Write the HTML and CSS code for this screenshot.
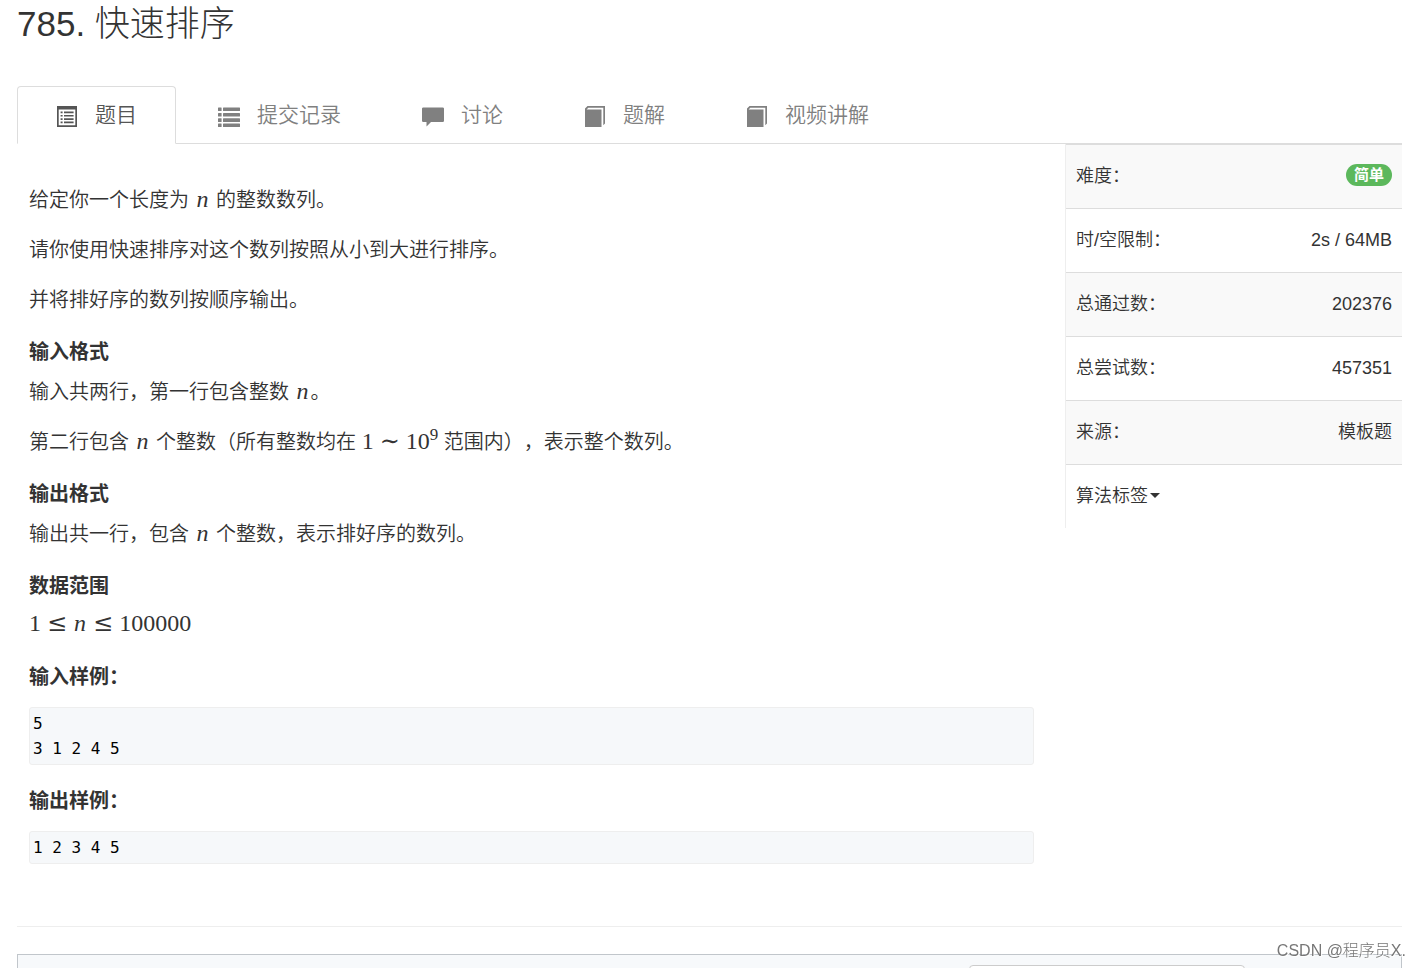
FILE: index.html
```html
<!DOCTYPE html>
<html lang="zh-CN">
<head>
<meta charset="utf-8">
<title>785. 快速排序</title>
<link rel="stylesheet" href="styles.css">
</head>
<body>
<div class="page">
  <h1 class="title">785. 快速排序</h1>

  <nav class="tabs">
    <a class="tab active" href="#problem">
      <svg class="icon" viewBox="0 0 22 22" aria-hidden="true"><path fill-rule="evenodd" d="M1 1h20v21H1zM2.700 4.600v15.700h16.600V4.600z"/><path d="M4.600 6.600h2v1.600h-2zM8 6.600h9.600v1.600H8zM4.600 10h2v1.600h-2zM8 10h9.600v1.600H8zM4.600 13.300h2v1.600h-2zM8 13.300h9.600v1.600H8zM4.600 16.600h2v1.600h-2zM8 16.600h9.600v1.600H8z"/></svg>
      <span>题目</span>
    </a>
    <a class="tab" href="#submissions">
      <svg class="icon" viewBox="0 0 22 22" aria-hidden="true"><rect x="0" y="2.500" width="3.600" height="3.600" rx=".5"/><rect x="5" y="2.500" width="17" height="3.600" rx=".5"/><rect x="0" y="8" width="3.600" height="3.600" rx=".5"/><rect x="5" y="8" width="17" height="3.600" rx=".5"/><rect x="0" y="13.300" width="3.600" height="3.600" rx=".5"/><rect x="5" y="13.300" width="17" height="3.600" rx=".5"/><rect x="0" y="18.400" width="3.600" height="3.600" rx=".5"/><rect x="5" y="18.400" width="17" height="3.600" rx=".5"/></svg>
      <span>提交记录</span>
    </a>
    <a class="tab" href="#discussion">
      <svg class="icon" viewBox="0 0 22 22" aria-hidden="true"><path d="M1.500 2.500h19A1.400 1.400 0 0 1 22 4v11.500a1.400 1.400 0 0 1-1.500 1.500H9l-4.500 4.500V17h-3A1.400 1.400 0 0 1 0 15.500V4a1.400 1.400 0 0 1 1.500-1.500z"/></svg>
      <span>讨论</span>
    </a>
    <a class="tab" href="#solutions">
      <svg class="icon" viewBox="0 0 22 22" aria-hidden="true"><path d="M3.500 1H21v17.500l-1.700 1.700V2.700H4.300L2.600 4.400H17.500V22H1V3.500z"/></svg>
      <span>题解</span>
    </a>
    <a class="tab" href="#videos">
      <svg class="icon" viewBox="0 0 22 22" aria-hidden="true"><path d="M3.500 1H21v17.500l-1.700 1.700V2.700H4.300L2.600 4.400H17.500V22H1V3.500z"/></svg>
      <span>视频讲解</span>
    </a>
  </nav>

  <div class="columns">
    <main class="problem" id="problem">
      <p>给定你一个长度为 <i class="var">n</i> 的整数数列。</p>
      <p>请你使用快速排序对这个数列按照从小到大进行排序。</p>
      <p>并将排好序的数列按顺序输出。</p>
      <h4>输入格式</h4>
      <p>输入共两行，第一行包含整数 <i class="var">n</i>。</p>
      <p>第二行包含 <i class="var">n</i> 个整数（所有整数均在 <span class="math">1<span class="op">∼</span>10<sup>9</sup></span> 范围内），表示整个数列。</p>
      <h4>输出格式</h4>
      <p>输出共一行，包含 <i class="var">n</i> 个整数，表示排好序的数列。</p>
      <h4>数据范围</h4>
      <p class="range"><span class="math">1<span class="op">≤</span><i class="var">n</i><span class="op">≤</span>100000</span></p>
      <h4 class="sample">输入样例：</h4>
      <pre>5
3 1 2 4 5</pre>
      <h4 class="sample">输出样例：</h4>
      <pre>1 2 3 4 5</pre>
    </main>

    <aside class="side">
      <table class="info">
        <tbody>
          <tr><th scope="row">难度：</th><td><span class="badge">简单</span></td></tr>
          <tr><th scope="row">时/空限制：</th><td>2s / 64MB</td></tr>
          <tr><th scope="row">总通过数：</th><td>202376</td></tr>
          <tr><th scope="row">总尝试数：</th><td>457351</td></tr>
          <tr><th scope="row">来源：</th><td>模板题</td></tr>
          <tr><th scope="row" colspan="2"><button class="toggle" type="button">算法标签<span class="caret"></span></button></th></tr>
        </tbody>
      </table>
    </aside>
  </div>

  <hr class="rule">

  <section class="editor">
    <select class="language" aria-label="语言"><option></option></select>
  </section>
</div>
<div class="watermark">CSDN @程序员X.</div>
</body>
</html>
```

FILE: styles.css
```css
* {
  box-sizing: border-box;
}

body {
  margin: 0;
  height: 100vh;
  overflow: hidden;
  background: #fff;
  color: #333;
  font-family: "Liberation Sans", "Noto Sans CJK SC", sans-serif;
  font-size: 20px;
  font-weight: 350;
  line-height: 30px;
  text-spacing-trim: space-all;
}

.page {
  padding: 4px 18px 0 17px;
}

.title {
  margin: 0 0 42px;
  font-size: 35px;
  font-weight: 300;
  line-height: 40px;
}

.tabs {
  display: flex;
  gap: 3px;
  border-bottom: 1px solid #ddd;
}

.tab {
  display: flex;
  align-items: center;
  gap: 17px;
  height: 58px;
  margin-bottom: -1px;
  padding: 0 38px;
  border: 1px solid transparent;
  border-radius: 4px 4px 0 0;
  color: #808080;
  font-size: 21px;
  text-decoration: none;
}

.tab.active {
  border-color: #ddd;
  border-bottom-color: #fff;
  background: #fff;
  color: #555;
}

.icon {
  width: 22px;
  height: 22px;
  flex: none;
  margin-top: 2px;
  fill: currentColor;
}

.columns {
  display: grid;
  grid-template-columns: 1048fr 337fr;
  align-items: start;
}

.problem {
  padding: 41px 31px 0 12px;
}

.problem p {
  margin: 0 0 20px;
}

.problem .range {
  margin-bottom: 29px;
  line-height: 26px;
}

.problem h4 {
  margin: 26px 0 14px;
  font-size: 20px;
  font-weight: 700;
  line-height: 22px;
}

.problem .sample {
  margin: 25px 0 19px;
}

.var,
.math {
  font-family: "Liberation Serif", serif;
  font-size: 24px;
  font-weight: 400;
  line-height: 1;
}

.var {
  margin: 0 2px;
}

.math .var {
  margin: 0 1px;
}

.op {
  margin: 0 6px;
  font-family: "DejaVu Serif", serif;
  line-height: 0;
}

.math sup {
  font-size: 17px;
  line-height: 0;
}

.problem pre {
  margin: 0;
  padding: 3px;
  border: 1px solid #eee;
  border-radius: 3px;
  background: #f6f8fa;
  color: #000;
  font-family: "DejaVu Sans Mono", monospace;
  font-size: 16px;
  font-weight: 400;
  line-height: 25px;
}

.side {
  border-left: 1px solid #eee;
}

.info {
  width: 100%;
  border-spacing: 0;
  font-size: 18px;
  line-height: 26px;
}

.info th,
.info td {
  height: 64px;
  padding: 0 10px 2px;
  border-top: 1px solid #ddd;
  font-weight: 350;
  text-align: left;
}

.info td {
  text-align: right;
}

.info tr:nth-child(odd) {
  background: #f9f9f9;
}

.badge {
  display: block;
  width: fit-content;
  margin: 0 0 2px auto;
  padding: 0 8px;
  border-radius: 11px;
  background: #5cb85c;
  color: #fff;
  font-size: 15px;
  font-weight: 700;
  line-height: 22px;
}

.toggle {
  display: flex;
  align-items: center;
  gap: 2px;
  padding: 0;
  border: 0;
  background: none;
  color: inherit;
  font: inherit;
}

.caret {
  border: 5px solid transparent;
  border-top-color: #333;
  border-bottom: 0;
}

.rule {
  margin: 62px 0 27px;
  border: 0;
  border-top: 1px solid #eee;
}

.editor {
  display: flex;
  justify-content: flex-end;
  padding: 10px 156px 10px 10px;
  border: 1px solid #c1c6cb;
  background: #f7f9fb;
}

.language {
  width: 276px;
  height: 36px;
  border: 1px solid #ccc;
  border-radius: 4px;
  background: #fff;
  appearance: none;
}

.watermark {
  position: fixed;
  right: 14px;
  bottom: 5px;
  color: #777;
  font-size: 16px;
  font-weight: 300;
  line-height: 24px;
  text-shadow: 1px 1px 1px #fff;
}
```
